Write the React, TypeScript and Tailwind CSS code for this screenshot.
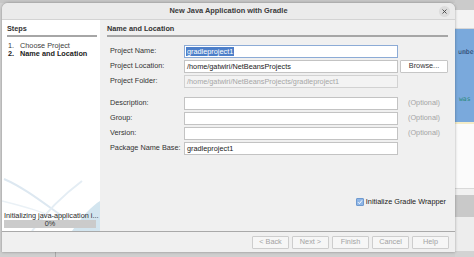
import React from "react";

const font = { fontFamily: '"Liberation Sans", Arial, sans-serif' };

function Input({ value, focused, disabled }: { value?: string; focused?: boolean; disabled?: boolean }) {
  return (
    <div
      className={
        "h-[13px] flex items-center px-[1px] border " +
        (focused
          ? "border-[#8cabd6] bg-white"
          : disabled
          ? "border-[#d2d2d2] bg-[#f3f3f3] text-[#a6a6a6]"
          : "border-[#c3c3c3] bg-white text-[#222]")
      }
    >
      {focused ? (
        <span className="bg-[#4d7fc9] text-white leading-[9px] px-[1px]">{value}</span>
      ) : (
        <span className="leading-[9px] px-[1px] whitespace-nowrap overflow-hidden">{value}</span>
      )}
    </div>
  );
}

function Btn({ label }: { label: string }) {
  return (
    <div className="w-[37px] h-[13px] flex items-center justify-center border border-[#cdcdcd] bg-[#f6f6f6] rounded-[1px] text-[#a3a3a3]">
      {label}
    </div>
  );
}

export default function App() {
  const labelCls = "h-[13px] flex items-center text-[#333] whitespace-nowrap";
  const optCls = "h-[13px] flex items-center justify-center text-[#a5a5a5]";
  return (
    <div className="relative w-[474px] h-[257px] overflow-hidden bg-[#d2d2d2] text-[7.3px]" style={font}>
      {/* background desktop / other app */}
      <div className="flex w-full h-full">
        <div className="flex-1 flex flex-col">
          <div className="h-[3px] bg-[#c7c7c7]" />
          <div className="flex-1" />
          <div className="h-[6px] bg-[#cfcfcf] flex">
            <div className="w-[55px]" />
            <div className="w-[1px] bg-[#a9a9a9]" />
          </div>
        </div>
        <div className="w-[19px] flex flex-col">
          <div className="h-[10px] bg-[#cbcbcb]" />
          <div className="h-[18px] bg-[#f3f3f3]" />
          <div className="h-[1px] bg-[#d6d6d6]" />
          <div className="h-[93px] bg-[#7aa9dc] flex flex-col text-[6.5px] font-['DejaVu_Sans_Mono',monospace]">
            <div className="h-[19px]" />
            <div className="text-[#1e3c66] leading-[8px] whitespace-nowrap pl-[3px]">umbe</div>
            <div className="h-[39px]" />
            <div className="text-[#2c8a7c] leading-[8px] whitespace-nowrap">&nbsp;was</div>
          </div>
          <div className="h-[2px] bg-[#f4ecc7]" />
          <div className="h-[64px] bg-[#fbfbfb]" />
          <div className="h-[1px] bg-[#d9d9d9]" />
          <div className="h-[6px] bg-[#f1f1f1]" />
          <div className="h-[22px] bg-[#c9c9c9]" />
          <div className="flex-1 bg-[#ededed]" />
          <div className="h-[6px] bg-[#d3d3d3]" />
        </div>
      </div>

      {/* dialog window */}
      <div className="absolute left-[2px] top-[3px] w-[453px] h-[249px] flex flex-col rounded-t-[6px] overflow-hidden shadow-[0_0_3px_rgba(0,0,0,0.35)] bg-[#f0f0f0]">
        {/* title bar */}
        <div className="h-[17px] relative flex items-center justify-center bg-[#ebebeb] border-b border-[#d3d3d3]">
          <span className="font-bold text-[7.4px] text-[#3a3a3a]">New Java Application with Gradle</span>
          <div className="absolute right-[5px] top-[3px] w-[11px] h-[11px] rounded-full bg-[#dcdcdc] flex items-center justify-center">
            <svg width="5" height="5" viewBox="0 0 5 5">
              <path d="M0.5 0.5 L4.5 4.5 M4.5 0.5 L0.5 4.5" stroke="#444" strokeWidth="0.9" />
            </svg>
          </div>
        </div>

        {/* body */}
        <div className="h-[211px] flex">
          {/* steps panel */}
          <div className="w-[98px] relative bg-white flex flex-col px-[5px] overflow-hidden">
            <svg className="absolute left-0 bottom-0" width="98" height="70" viewBox="0 0 98 70">
              <path d="M2 18 C 25 28, 45 45, 70 62" stroke="#dde8f1" strokeWidth="2" fill="none" />
              <path d="M30 70 C 45 50, 60 35, 80 20" stroke="#e4edf4" strokeWidth="2" fill="none" />
              <path d="M70 70 C 80 55, 90 45, 98 40 L98 70 Z" fill="#d3e5ef" />
              <path d="M0 40 C 20 45, 40 50, 60 60" stroke="#eaf1f6" strokeWidth="1.5" fill="none" />
            </svg>
            <div className="relative pt-[4px] leading-[10px] font-bold text-[#333]">Steps</div>
            <div className="relative mt-[1px] h-[2px] bg-[#a6a6a6] mr-[-2px]" />
            <div className="relative mt-[5px] leading-[8px] text-[#3c3c3c] flex pl-[1px]">
              <span className="w-[12px]">1.</span>
              <span>Choose Project</span>
            </div>
            <div className="relative leading-[8px] font-bold text-[#222] flex pl-[1px]">
              <span className="w-[12px]">2.</span>
              <span>Name and Location</span>
            </div>
            <div className="flex-1" />
            <div className="relative ml-[-3px] mr-[-1px] flex flex-col pb-[3px]">
              <div className="leading-[9px] text-[#2a2a2a] whitespace-nowrap">Initializing java-application i...</div>
              <div className="h-[8px] bg-[#cbcbcb] flex items-center justify-center text-[#333] leading-[8px]">0%</div>
            </div>
          </div>

          {/* right panel */}
          <div className="flex-1 flex flex-col pl-[7px] pr-[7px]">
            <div className="pt-[4px] leading-[10px] font-bold text-[#333]">Name and Location</div>
            <div className="mt-[1px] h-[2px] bg-[#a6a6a6]" />
            <div className="mt-[8px] pl-[3px] grid grid-cols-[72px_214px_1fr] gap-x-[2px] gap-y-[2px]">
              <div className={labelCls}>Project Name:</div>
              <Input value="gradleproject1" focused />
              <div />
              <div className={labelCls}>Project Location:</div>
              <Input value="/home/gatwiri/NetBeansProjects" />
              <div className="h-[13px] flex items-center justify-center border border-[#c6c6c6] bg-white text-[#333] rounded-[1px]">
                Browse...
              </div>
              <div className={labelCls}>Project Folder:</div>
              <Input value="/home/gatwiri/NetBeansProjects/gradleproject1" disabled />
              <div />
              <div className="h-[5px] col-span-3" />
              <div className={labelCls}>Description:</div>
              <Input />
              <div className={optCls}>(Optional)</div>
              <div className={labelCls}>Group:</div>
              <Input />
              <div className={optCls}>(Optional)</div>
              <div className={labelCls}>Version:</div>
              <Input />
              <div className={optCls}>(Optional)</div>
              <div className={labelCls}>Package Name Base:</div>
              <Input value="gradleproject1" />
              <div />
            </div>
            <div className="flex-1" />
            <div className="flex items-center justify-end pb-[24px] pr-[2px]">
              <div className="w-[8px] h-[8px] rounded-[1px] border border-[#6f9ad0] bg-[#8fb6e6] flex items-center justify-center mr-[2px]">
                <svg width="6" height="6" viewBox="0 0 6 6">
                  <path d="M1 3.2 L2.4 4.6 L5 1.4" stroke="white" strokeWidth="1" fill="none" />
                </svg>
              </div>
              <span className="text-[#222] leading-[10px]">Initialize Gradle Wrapper</span>
            </div>
          </div>
        </div>

        {/* footer */}
        <div className="h-[1px] bg-[#a9a9a9]" />
        <div className="flex-1 flex items-start justify-end gap-[3px] pt-[4px] pr-[6px] bg-[#f0f0f0]">
          <Btn label="< Back" />
          <Btn label="Next >" />
          <Btn label="Finish" />
          <Btn label="Cancel" />
          <Btn label="Help" />
        </div>
      </div>
    </div>
  );
}
